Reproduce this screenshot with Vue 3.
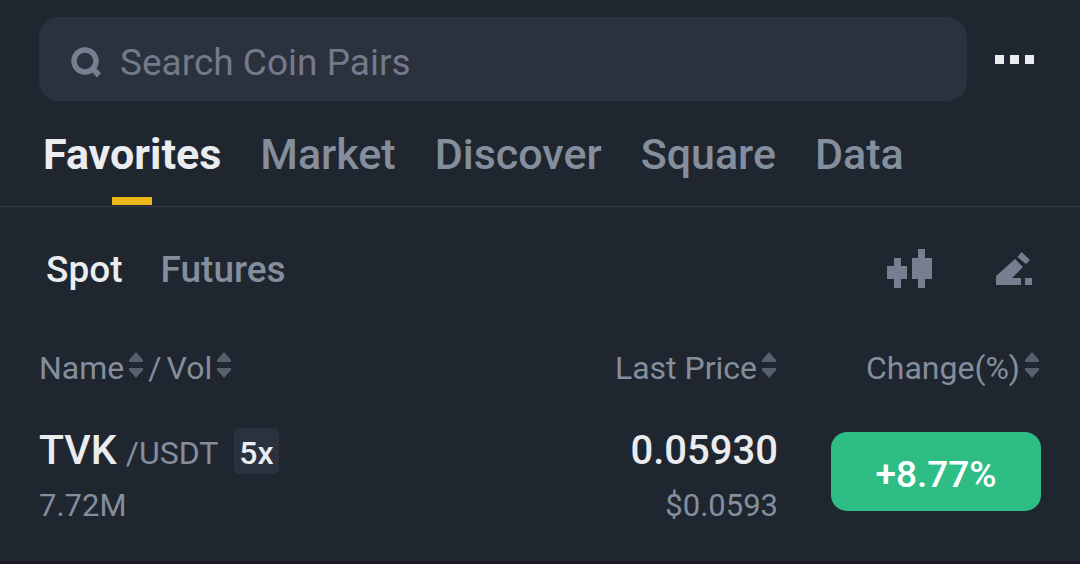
<script setup>
import { ref } from 'vue'

const query = ref('')
const tabs = ['Favorites', 'Market', 'Discover', 'Square', 'Data']
const markets = ['Spot', 'Futures']
const activeTab = ref('Favorites')
const activeMarket = ref('Spot')
const rows = [
  { base: 'TVK', quote: 'USDT', leverage: '5x', volume: '7.72M', price: '0.05930', fiat: '$0.0593', change: '+8.77%' },
]
</script>

<template>
  <main class="page">
    <header class="top">
      <label class="search">
        <svg class="search-icon" viewBox="0 0 31 31" aria-hidden="true">
          <circle cx="14" cy="14" r="11" fill="none" stroke="currentColor" stroke-width="5.5" />
          <path d="M19 23 L23 19 L30 26 L26 30.500 Z" fill="currentColor" />
        </svg>
        <input v-model="query" type="text" placeholder="Search Coin Pairs" aria-label="Search Coin Pairs" />
      </label>
      <button class="more" type="button" aria-label="More">
        <svg viewBox="0 0 39 9" aria-hidden="true">
          <path d="M0 0h9v9H0zM15 0h9v9h-9zM30 0h9v9h-9z" fill="currentColor" />
        </svg>
      </button>
    </header>

    <nav class="tabs">
      <button
        v-for="tab in tabs"
        :key="tab"
        type="button"
        class="tab"
        :class="{ active: tab === activeTab }"
        @click="activeTab = tab"
      >{{ tab }}</button>
    </nav>

    <div class="toolbar">
      <div class="markets">
        <button
          v-for="market in markets"
          :key="market"
          type="button"
          class="market"
          :class="{ active: market === activeMarket }"
          @click="activeMarket = market"
        >{{ market }}</button>
      </div>
      <div class="tools">
        <button type="button" aria-label="Charts">
          <svg class="candles" viewBox="0 0 45 39" aria-hidden="true">
            <path d="M7 9h7v8h6v13h-6v9H7v-9H0V17h7zM31 0h7v9h7v21h-7v9h-7v-9h-6V9h6z" fill="currentColor" />
          </svg>
        </button>
        <button type="button" aria-label="Edit favorites">
          <svg class="pencil" viewBox="0 0 36 33" aria-hidden="true">
            <path d="M0 24 L19 7 L27 15 L16 26 H25 V33 H0Z M21.500 5 L25.500 0 L34 8 L30 12Z M29 26h7v7h-7z" fill="currentColor" />
          </svg>
        </button>
      </div>
    </div>

    <table class="pairs">
      <thead>
        <tr>
          <th class="name" scope="col">
            <span class="sorts">
              <button class="sort" type="button">Name<svg viewBox="0 0 14 26" aria-hidden="true"><path d="M0 10V8L7 0l7 8v2zM0 16v2l7 8 7-8v-2z" fill="currentColor" /></svg></button>
              <span class="slash">/</span>
              <button class="sort" type="button">Vol<svg viewBox="0 0 14 26" aria-hidden="true"><path d="M0 10V8L7 0l7 8v2zM0 16v2l7 8 7-8v-2z" fill="currentColor" /></svg></button>
            </span>
          </th>
          <th class="price" scope="col">
            <button class="sort" type="button">Last Price<svg viewBox="0 0 14 26" aria-hidden="true"><path d="M0 10V8L7 0l7 8v2zM0 16v2l7 8 7-8v-2z" fill="currentColor" /></svg></button>
          </th>
          <th class="change" scope="col">
            <button class="sort" type="button">Change(%)<svg viewBox="0 0 14 26" aria-hidden="true"><path d="M0 10V8L7 0l7 8v2zM0 16v2l7 8 7-8v-2z" fill="currentColor" /></svg></button>
          </th>
        </tr>
      </thead>
      <tbody>
        <tr v-for="row in rows" :key="row.base">
          <td class="name">
            <div class="pair">
              <span class="base">{{ row.base }}</span>
              <span class="quote">/{{ row.quote }}</span>
              <span class="leverage">{{ row.leverage }}</span>
            </div>
            <div class="sub">{{ row.volume }}</div>
          </td>
          <td class="price">
            <div class="last">{{ row.price }}</div>
            <div class="sub">{{ row.fiat }}</div>
          </td>
          <td class="change">
            <span class="badge">{{ row.change }}</span>
          </td>
        </tr>
      </tbody>
    </table>
  </main>
</template>

<style>
body {
  background: #202630;
}
</style>

<style scoped>
.page {
  box-sizing: border-box;
  min-height: 100vh;
  padding-top: 17px;
  border-bottom: 3px solid #1d1828;
  background: #202630;
  color: #848e9c;
  font-family: Roboto, "Open Sans", sans-serif;
}

button {
  margin: 0;
  padding: 0;
  border: 0;
  background: none;
  color: inherit;
  font: inherit;
  cursor: pointer;
}

svg {
  display: block;
  flex: none;
}

.top {
  display: flex;
  align-items: center;
  gap: 28px;
  padding: 0 46px 0 39px;
}

.search {
  display: flex;
  flex: 1;
  align-items: center;
  gap: 18px;
  height: 84px;
  padding: 7px 32px 0;
  box-sizing: border-box;
  border-radius: 20px;
  background: #2b313d;
  color: #767e8f;
}

.search-icon {
  width: 31px;
  height: 31px;
}

.search input {
  flex: 1;
  min-width: 0;
  padding: 0;
  border: 0;
  outline: 0;
  background: none;
  color: #eaecef;
  font: 400 37px/46px Roboto, "Open Sans", sans-serif;
}

.search input::placeholder {
  color: #727a8b;
  opacity: 1;
}

.more {
  color: #eaecef;
}

.more svg {
  width: 39px;
  height: 9px;
}

.tabs {
  display: flex;
  gap: 39px;
  padding: 0 43px;
  border-bottom: 1px solid #353b45;
}

.tab {
  position: relative;
  height: 105px;
  font-size: 43px;
  font-weight: 500;
  line-height: 50px;
}

.tab.active {
  color: #eaecef;
  font-weight: 700;
}

.tab.active::after {
  position: absolute;
  bottom: 1px;
  left: 50%;
  width: 40px;
  height: 8px;
  margin-left: -20px;
  background: #ecb818;
  content: "";
}

.toolbar {
  display: flex;
  align-items: center;
  justify-content: space-between;
  height: 124px;
  padding: 0 48px 0 46px;
}

.markets {
  display: flex;
  gap: 38px;
}

.market {
  padding-top: 2px;
  font-size: 37px;
  font-weight: 500;
  line-height: 44px;
}

.market.active {
  color: #eaecef;
}

.tools {
  display: flex;
  align-items: center;
  gap: 64px;
  padding-bottom: 2px;
  color: #767f90;
}

.candles {
  width: 45px;
  height: 39px;
}

.pencil {
  width: 36px;
  height: 33px;
}

.pairs {
  width: 100%;
  border-collapse: collapse;
}

th,
td {
  padding: 0;
  text-align: left;
  vertical-align: top;
}

th {
  height: 96px;
  padding-top: 17px;
  box-sizing: border-box;
  font-size: 32px;
  font-weight: 400;
  line-height: 40px;
}

.name {
  padding-left: 39px;
}

.price {
  text-align: right;
}

.change {
  width: 263px;
  padding-right: 39px;
  text-align: right;
}

.sorts {
  display: flex;
  gap: 5px;
}

.sort {
  display: inline-flex;
  align-items: center;
  gap: 5px;
}

th > .sort {
  margin-right: 2px;
}

.sort svg {
  width: 14px;
  height: 26px;
  margin-bottom: 6px;
  color: #56606c;
}

.pair {
  display: flex;
  align-items: baseline;
  height: 54px;
  line-height: 46px;
}

.base {
  color: #eaecef;
  font-size: 41px;
  font-weight: 500;
}

.quote {
  margin-left: 9px;
  font-size: 32px;
}

.leverage {
  margin-left: 16px;
  padding: 5px 5px 0;
  border-radius: 5px;
  background: #2b313d;
  color: #eaecef;
  font-size: 32px;
  font-weight: 500;
  line-height: 41px;
}

.last {
  height: 54px;
  color: #eaecef;
  font-size: 40px;
  font-weight: 500;
  line-height: 48px;
}

.sub {
  font-size: 31px;
  line-height: 50px;
}

.badge {
  display: block;
  box-sizing: border-box;
  height: 79px;
  margin: 5px 0 0 53px;
  padding-top: 3px;
  border-radius: 16px;
  background: #2ebd85;
  color: #fff;
  font-size: 37px;
  font-weight: 500;
  line-height: 79px;
  text-align: center;
}
</style>
